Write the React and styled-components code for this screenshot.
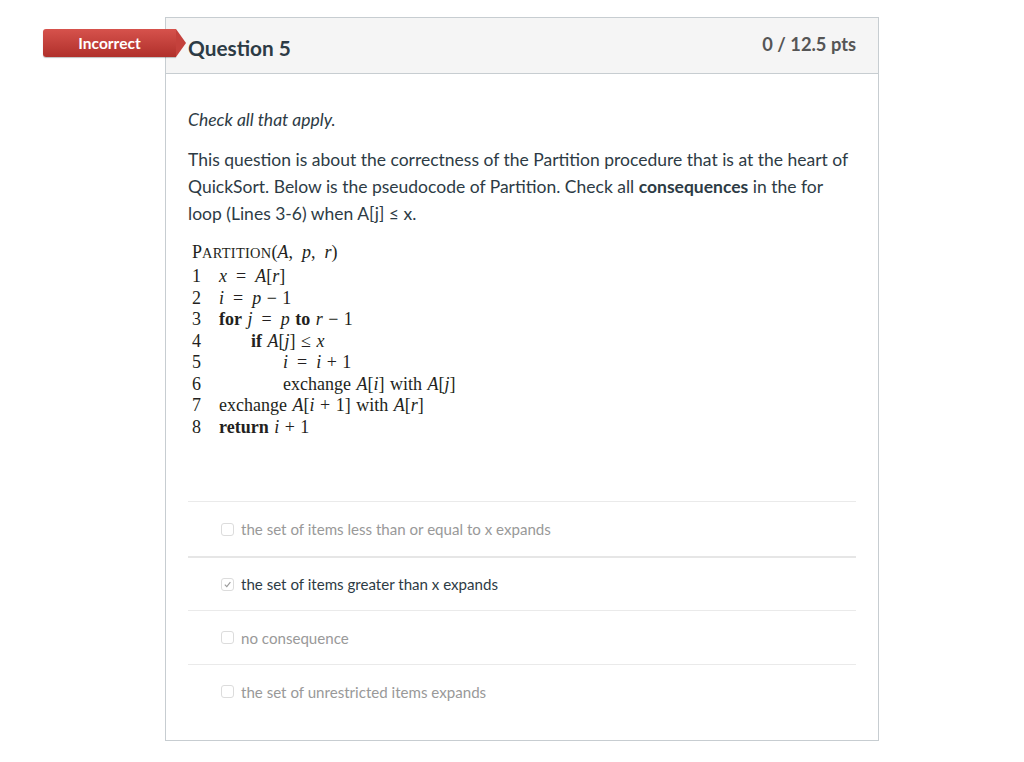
import React from 'react';
import styled, { createGlobalStyle } from 'styled-components';

const GlobalStyle = createGlobalStyle`
  html, body {
    margin: 0;
    padding: 0;
    background: #fff;
    font-family: Lato, "Open Sans", sans-serif;
    color: #2d3b45;
  }
`;

const Page = styled.div`
  padding: 17px 0 20px 165px;
`;

const Card = styled.div`
  position: relative;
  width: 712px;
  border: 1px solid #c7cdd1;
`;

const Badge = styled.div`
  position: absolute;
  top: 11px;
  left: -123px;
  width: 133px;
  height: 28px;
  display: flex;
  align-items: center;
  justify-content: center;
  color: #fff;
  font-size: 15.5px;
  font-weight: 700;
  border-radius: 3px 0 0 3px;
  background: linear-gradient(#d6524c, #b0302b);
  box-shadow: 0 1px 1px rgba(0, 0, 0, 0.25);

  &::after {
    content: '';
    position: absolute;
    right: -10px;
    top: 0;
    border-top: 14px solid transparent;
    border-bottom: 14px solid transparent;
    border-left: 10px solid #c4413c;
  }
`;

const Header = styled.div`
  height: 55px;
  display: flex;
  align-items: center;
  justify-content: space-between;
  padding: 0 22px;
  background: #f5f5f5;
  border-bottom: 1px solid #c7cdd1;
`;

const Title = styled.h2`
  margin: 0;
  padding-top: 4px;
  font-size: 20.8px;
  font-weight: 700;
  color: #2d3b45;
`;

const Points = styled.div`
  padding-bottom: 3px;
  font-size: 18.3px;
  font-weight: 700;
  color: #555;
`;

const Body = styled.div`
  padding: 32px 22px 22px;
`;

const Text = styled.p`
  margin: 0 0 13px;
  font-size: 17.5px;
  line-height: 27px;
  font-style: ${(p) => (p.$italic ? 'italic' : 'normal')};
`;

const Code = styled.div`
  margin: 14px 0 0 4px;
  font-family: "Liberation Serif", "Times New Roman", serif;
  font-size: 18px;
  word-spacing: 1px;
  color: #231f20;
`;

const CodeTitle = styled.div`
  line-height: 22px;
  margin-bottom: 2px;
`;

const SmallCaps = styled.span`
  font-size: 0.8em;
  text-transform: uppercase;
  letter-spacing: 0.3px;
`;

const CodeLine = styled.div`
  display: flex;
  line-height: 21.5px;
`;

const LineNo = styled.span`
  width: 27px;
  flex: none;
`;

const Stmt = styled.span`
  padding-left: ${(p) => p.$indent * 32}px;
  white-space: pre;
`;

const V = styled.i`
  font-style: italic;
`;

const K = styled.b`
  font-weight: 700;
`;

const Answers = styled.div`
  margin-top: 63px;
  border-top: 1px solid #eaeaea;
`;

const Answer = styled.label`
  box-sizing: border-box;
  display: flex;
  align-items: center;
  height: 54px;
  padding-left: 33px;
  font-size: 15.1px;
  color: ${(p) => (p.$selected ? '#2d3b45' : '#999')};
  border-top: ${(p) => (p.$first ? 'none' : p.$selected ? '2px solid #e6e6e6' : '1px solid #eaeaea')};
`;

const Box = styled.span`
  width: 11px;
  height: 11px;
  margin-right: 7px;
  border: 1px solid #dcdcdc;
  border-radius: 3px;
  display: flex;
  align-items: center;
  justify-content: center;
  background: #fff;
`;

const Check = () => (
  <svg width="9" height="9" viewBox="0 0 10 10">
    <path d="M2 5.2 L4.2 7.4 L8.2 2.4" fill="none" stroke="#999" strokeWidth="1.2" />
  </svg>
);

const answers = [
  { text: 'the set of items less than or equal to x expands', selected: false },
  { text: 'the set of items greater than x expands', selected: true },
  { text: 'no consequence', selected: false },
  { text: 'the set of unrestricted items expands', selected: false },
];

const EQ = '\u2002=\u2002';
const SEP = ',\u2002';

export default function App() {
  return (
    <Page>
      <GlobalStyle />
      <Card>
        <Badge>Incorrect</Badge>
        <Header>
          <Title>Question 5</Title>
          <Points>0 / 12.5 pts</Points>
        </Header>
        <Body>
          <Text $italic>Check all that apply.</Text>
          <Text>
            This question is about the correctness of the Partition procedure that is at the heart of
            QuickSort. Below is the pseudocode of Partition. Check all <K>consequences</K> in the for
            loop (Lines 3-6) when A[j] ≤ x.
          </Text>
          <Code>
            <CodeTitle>
              P<SmallCaps>artition</SmallCaps>(<V>A</V>{SEP}<V>p</V>{SEP}<V>r</V>)
            </CodeTitle>
            <CodeLine>
              <LineNo>1</LineNo>
              <Stmt $indent={0}><V>x</V>{EQ}<V>A</V>[<V>r</V>]</Stmt>
            </CodeLine>
            <CodeLine>
              <LineNo>2</LineNo>
              <Stmt $indent={0}><V>i</V>{EQ}<V>p</V> − 1</Stmt>
            </CodeLine>
            <CodeLine>
              <LineNo>3</LineNo>
              <Stmt $indent={0}><K>for</K> <V>j</V>{EQ}<V>p</V> <K>to</K> <V>r</V> − 1</Stmt>
            </CodeLine>
            <CodeLine>
              <LineNo>4</LineNo>
              <Stmt $indent={1}><K>if</K> <V>A</V>[<V>j</V>] ≤ <V>x</V></Stmt>
            </CodeLine>
            <CodeLine>
              <LineNo>5</LineNo>
              <Stmt $indent={2}><V>i</V>{EQ}<V>i</V> + 1</Stmt>
            </CodeLine>
            <CodeLine>
              <LineNo>6</LineNo>
              <Stmt $indent={2}>exchange <V>A</V>[<V>i</V>] with <V>A</V>[<V>j</V>]</Stmt>
            </CodeLine>
            <CodeLine>
              <LineNo>7</LineNo>
              <Stmt $indent={0}>exchange <V>A</V>[<V>i</V> + 1] with <V>A</V>[<V>r</V>]</Stmt>
            </CodeLine>
            <CodeLine>
              <LineNo>8</LineNo>
              <Stmt $indent={0}><K>return</K> <V>i</V> + 1</Stmt>
            </CodeLine>
          </Code>
          <Answers>
            {answers.map((a, i) => (
              <Answer key={a.text} $selected={a.selected} $first={i === 0}>
                <Box>{a.selected && <Check />}</Box>
                {a.text}
              </Answer>
            ))}
          </Answers>
        </Body>
      </Card>
    </Page>
  );
}
